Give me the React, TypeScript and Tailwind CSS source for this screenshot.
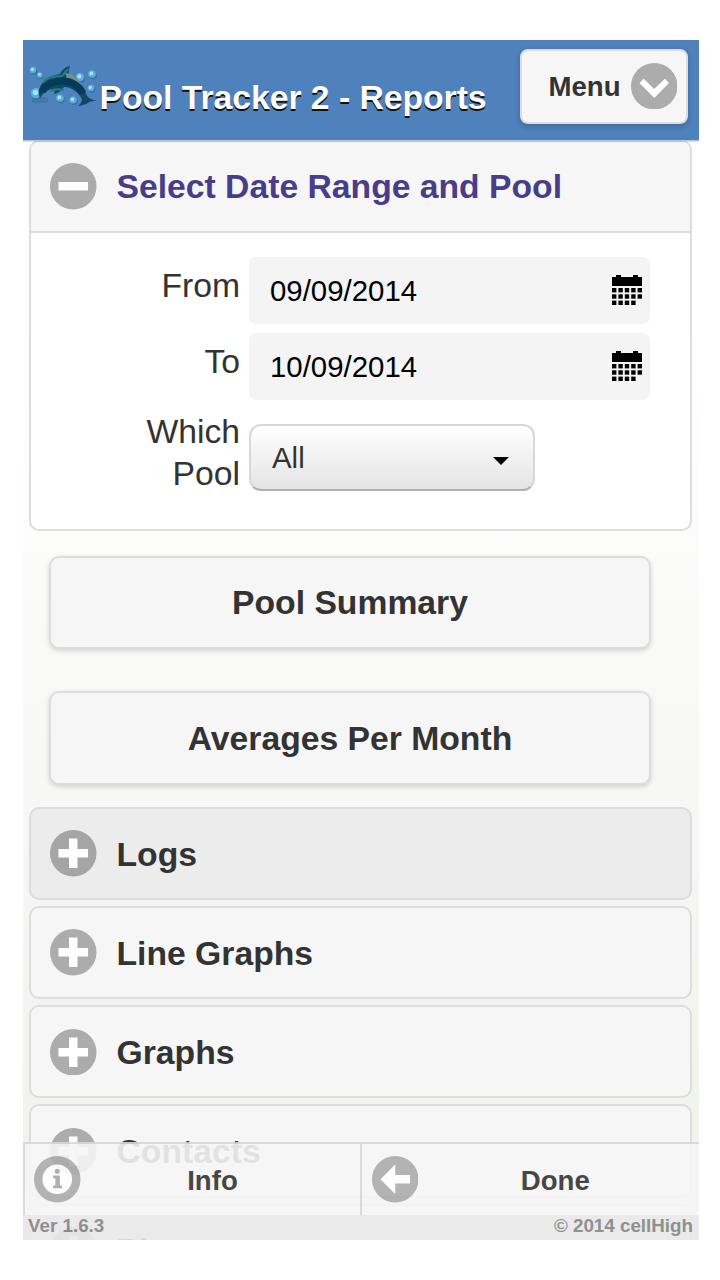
import React from "react";

interface SectionProps {
  title: string;
  active?: boolean;
}

const sections: SectionProps[] = [
  { title: "Logs", active: true },
  { title: "Line Graphs" },
  { title: "Graphs" },
  { title: "Contacts" },
  { title: "Pictures" },
];

const reports = ["Pool Summary", "Averages Per Month"];

function Disc({ children }: { children: React.ReactNode }) {
  return (
    <svg viewBox="0 0 44 44" className="h-[46.5px] w-[46.5px] shrink-0">
      <circle cx="22" cy="22" r="22" fill="#000" fillOpacity="0.3" />
      {children}
    </svg>
  );
}

function PlusDisc() {
  return (
    <Disc>
      <path d="M18 8h8v10h10v8H26v10h-8V26H8v-8h10z" fill="#fff" />
    </Disc>
  );
}

function Dolphin() {
  const bubbles = [
    [5, 6, 3.2],
    [12, 11, 2.8],
    [8, 29, 5.2],
    [32, 34, 3.8],
    [45, 36, 3.6],
    [52, 13, 4.2],
    [64, 10, 3.8],
    [63, 24, 3.2],
  ];

  return (
    <svg viewBox="0 0 70 44" className="h-11 w-[70px] shrink-0">
      <rect x="4" y="33" width="16" height="6" rx="2.500" fill="#41769d" opacity="0.8" />
      {bubbles.map(([x, y, r]) => (
        <g key={`${x}-${y}`}>
          <circle cx={x + 1} cy={y + 1.5} r={r} fill="#31688e" opacity="0.6" />
          <circle cx={x} cy={y} r={r} fill="#5aaedb" />
          <circle cx={x - 0.6} cy={y - 0.6} r={r * 0.5} fill="#a4e4f6" />
        </g>
      ))}
      <path
        d="M12 34C9 28 12 20 18 15c4-3 9-4 14-5 2-4 5-7 10-8-1 3-2 6-1 9 9 3 15 11 18 21 3 3 6 4 10 5-4 0-7 0-9 2-4 2-8 3-10 3 2-2 4-4 4-7-4-7-10-12-18-12-3 5-7 6-10 7l1-5c-7 0-11 3-15 9z"
        fill="#0e4a68"
      />
      <path d="M36 9c10 0 18 8 20 19-5-7-11-10-19-11 2-3 2-6-1-8z" fill="#75908a" />
      <path d="M14 28c3-8 11-11 21-11 9 0 15 4 20 12" stroke="#063a5a" strokeWidth="7" fill="none" />
      <path d="M15 19c4-6 11-7 19-7l6-7M22 27c4-2 9-2 14-1" stroke="#1b8481" strokeWidth="2" fill="none" />
    </svg>
  );
}

function CalendarGlyph() {
  const days = Array.from({ length: 14 }, (_, i) => i);
  return (
    <svg viewBox="0 0 30 31" className="h-[31px] w-[30px]" fill="#000">
      <path d="M0 2h4V0h5v2h12V0h5v2h4v9H0z" />
      {days.map((i) => (
        <rect key={i} x={(i % 5) * 6.4} y={13 + Math.floor(i / 5) * 6.3} width="4.4" height="4.4" />
      ))}
    </svg>
  );
}

function DateField({ label, value }: { label: string; value: string }) {
  return (
    <div className="flex">
      <label className="mr-[9px] w-[180px] pt-[9px] text-right leading-[38px]">{label}</label>
      <div className="flex h-[67px] w-[401px] items-center justify-between rounded-[7px] bg-[#f4f4f4] pr-[8.5px] pl-[21px] text-[29.4px] text-black">
        <span className="pt-px">{value}</span>
        <CalendarGlyph />
      </div>
    </div>
  );
}

function Section({ title, active }: SectionProps) {
  return (
    <div
      className={`flex h-[93.2px] shrink-0 items-center gap-[20px] rounded-[10px] border-2 border-[#dddddd] pl-[19px] font-bold ${
        active ? "bg-[#ececec]" : "bg-[#f6f6f6]"
      }`}
    >
      <PlusDisc />
      <span className="pt-px">{title}</span>
    </div>
  );
}

export default function App() {
  return (
    <div className="h-[1280px] w-[720px] overflow-hidden bg-white pt-10 pl-[22.5px]">
      <div className="relative flex h-[1200px] w-[676px] flex-col overflow-hidden bg-linear-to-b from-white from-25% to-[#eff1ec] font-['Liberation_Sans',Arial,sans-serif] text-[33.7px] text-[#333]">
        {/* Header */}
        <header className="relative z-10 flex h-[101px] shrink-0 justify-between border-b border-[#b9c6d6] bg-[#4f81bc] pr-[10.5px] pl-[5px] shadow-[0_1px_1px_rgba(0,0,0,0.12)]">
          <div className="flex items-start">
            <div className="mt-6">
              <Dolphin />
            </div>
            <h1 className="mt-[37px] ml-[2px] leading-[40px] font-bold tracking-[-0.02px] whitespace-nowrap text-white [text-shadow:0_2px_0_#111]">
              Pool Tracker 2 - Reports
            </h1>
          </div>
          <button className="mt-[8.5px] flex h-[75px] w-[168px] items-center justify-between rounded-[8px] border-2 border-[#dddddd] bg-[#f6f6f6] pr-[9px] pl-[26.5px] text-[27.6px] font-bold shadow-[0_2px_6px_rgba(0,0,0,0.2)]">
            <span className="pt-[2px]">Menu</span>
            <Disc>
              <path d="M8 19l4-4 10 9.500 10-9.500 4 4-14 14z" fill="#fff" />
            </Disc>
          </button>
        </header>

        <main className="flex flex-col px-[6.5px]">
          {/* Date range and pool */}
          <section className="-mt-[1px] h-[391px] rounded-[10px] border-2 border-[#dddddd] bg-white">
            <div className="flex h-[91px] items-center gap-[20px] rounded-t-[8px] border-b-2 border-[#dddddd] bg-[#f6f6f6] pl-[19px] font-bold text-[#483d8b]">
              <Disc>
                <path d="M8 18h28v8H8z" fill="#fff" />
              </Disc>
              <h2>Select Date Range and Pool</h2>
            </div>
            <div className="flex flex-col gap-[9px] pt-6 pl-[29px]">
              <DateField label="From" value="09/09/2014" />
              <DateField label="To" value="10/09/2014" />
              <div className="flex">
                <label className="mr-[9px] ml-[100px] w-20 pt-px text-right leading-[42.3px]">
                  <span className="float-right">Which</span>
                  <span className="float-right">Pool</span>
                </label>
                <div className="mt-[15px] flex h-[67px] w-[286px] items-center justify-between rounded-[12px] border-2 border-[#d8d8d8] border-b-[#b0b0b0] bg-linear-to-b from-white to-[#e4e4e4] pr-6 pl-[21px] text-[29.4px]">
                  <span className="pt-[2px]">All</span>
                  <svg viewBox="0 0 16 8" className="mt-1.5 h-2 w-4">
                    <path d="M0 0h16L8 8z" fill="#000" />
                  </svg>
                </div>
              </div>
            </div>
          </section>

          {/* Report buttons */}
          <div className="flex flex-col gap-[42px] px-5 pt-[25px] pr-[41px] pb-[22.3px]">
            {reports.map((name) => (
              <button
                key={name}
                className="h-[93.3px] rounded-[10px] border-2 border-[#dddddd] bg-[#f6f6f6] font-bold shadow-[0_2px_5px_rgba(0,0,0,0.15)]"
              >
                {name}
              </button>
            ))}
          </div>

          <div className="flex flex-col gap-[6px]">
            {sections.map((section) => (
              <Section key={section.title} {...section} />
            ))}
          </div>
        </main>

        {/* Footer stays over the scrolled list */}
        <footer className="absolute inset-x-0 bottom-0 z-20 h-[98px] bg-[#e9e9e9] font-bold opacity-90">
          <div className="grid h-[73px] grid-cols-2 border-t-2 border-l-2 border-[#d8d8d8] bg-[#f6f6f6] text-[27.6px]">
            <div className="flex items-center border-r-2 border-[#d8d8d8] pl-[9.5px]">
              <Disc>
                <circle cx="22" cy="22" r="14" fill="#fff" />
                <path d="M18 18.500h6.500v9.500h2v2.500h-8.500v-2.500h2.200v-7H18z" fill="#a8a8a8" />
                <circle cx="22" cy="14.500" r="2.400" fill="#a8a8a8" />
              </Disc>
              <span className="flex-1 pt-[3px] pr-[15px] text-center">Info</span>
            </div>
            <div className="flex items-center pl-[10px]">
              <Disc>
                <path d="M8 22l14-14v10h14v8H22v10z" fill="#fff" />
              </Disc>
              <span className="flex-1 pt-[3px] pr-[6px] text-center">Done</span>
            </div>
          </div>
          <div className="flex h-[25px] items-center justify-between px-[5.5px] text-[18.8px] leading-none text-[#858585]">
            <span className="pb-[3px]">Ver 1.6.3</span>
            <span className="pb-[3px]">© 2014 cellHigh</span>
          </div>
        </footer>
      </div>
    </div>
  );
}
